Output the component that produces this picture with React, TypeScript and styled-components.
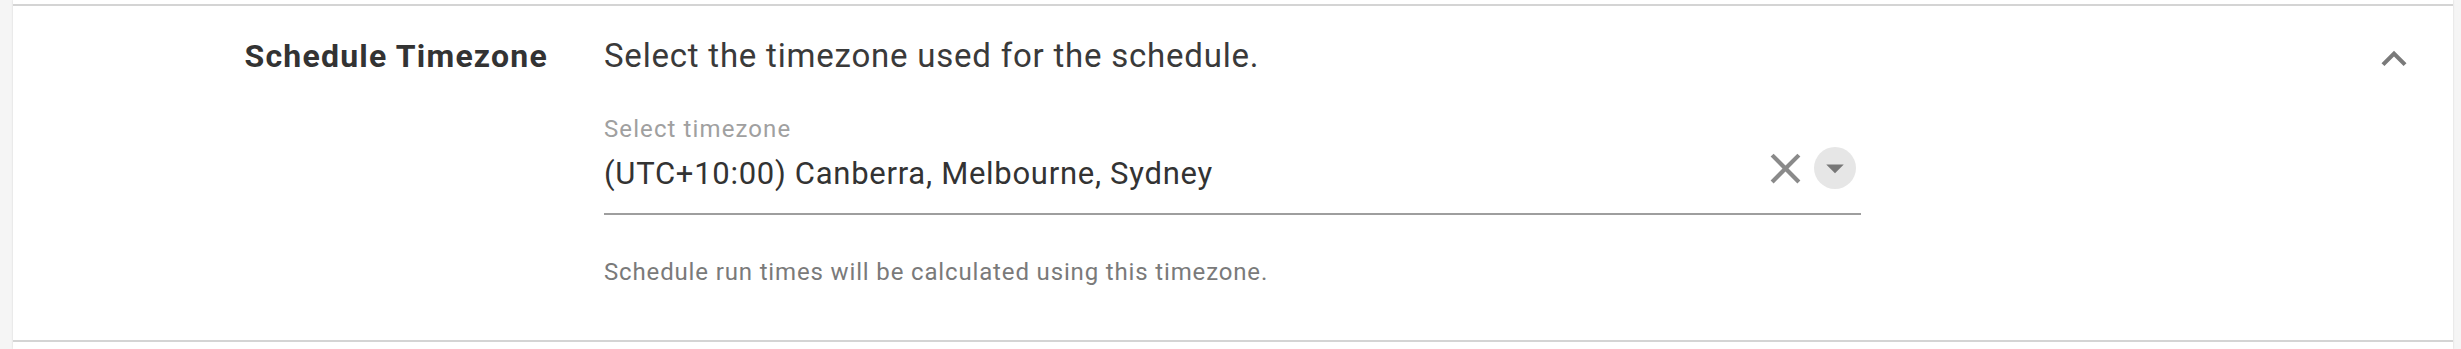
import styled, { createGlobalStyle } from "styled-components";

const GlobalStyle = createGlobalStyle`
  html, body {
    margin: 0;
    padding: 0;
    background: #f5f5f5;
    font-family: Roboto, "Liberation Sans", Arial, sans-serif;
  }
`;

const Panel = styled.div`
  margin: 0 8px 0 13px;
  min-height: 349px;
  padding-top: 4px;
  box-sizing: border-box;
  background: #ffffff;
  box-shadow: 0 0 2px rgba(0, 0, 0, 0.14);
`;

const Section = styled.section`
  display: flex;
  align-items: flex-start;
  padding: 30px 0 54px;
  border-top: 2px solid #d4d4d4;
  border-bottom: 2px solid #d4d4d4;
`;

const Heading = styled.h3`
  flex: 0 0 535px;
  margin: 0;
  text-align: right;
  font-size: 32px;
  line-height: 40px;
  font-weight: 700;
  letter-spacing: 1.2px;
  color: #333333;
`;

const Body = styled.div`
  flex: 0 0 1257px;
  margin-left: 56px;
  display: flex;
  flex-direction: column;
`;

const Description = styled.p`
  margin: 0 0 39px;
  font-size: 33px;
  line-height: 40px;
  letter-spacing: 0.78px;
  color: #3a3a3a;
`;

const FieldLabel = styled.label`
  display: block;
  font-size: 24px;
  line-height: 28px;
  letter-spacing: 1.1px;
  color: #a0a0a0;
`;

const InputRow = styled.div`
  display: flex;
  align-items: flex-start;
  height: 70px;
  padding-right: 5px;
  border-bottom: 2px solid #9e9e9e;
`;

const Value = styled.span`
  flex: 1;
  margin-top: 11px;
  font-size: 31px;
  line-height: 40px;
  letter-spacing: 0.72px;
  color: #333333;
  white-space: nowrap;
`;

const Adornments = styled.div`
  display: flex;
  align-items: center;
  height: 42px;
  margin-top: 4px;
  column-gap: 3px;
`;

const IconButton = styled.button<{ $size: number; $filled?: boolean }>`
  display: flex;
  align-items: center;
  justify-content: center;
  width: ${(p) => p.$size}px;
  height: ${(p) => p.$size}px;
  padding: 0;
  border: none;
  border-radius: 50%;
  background: ${(p) => (p.$filled ? "#e6e6e6" : "transparent")};
  cursor: pointer;

  svg {
    flex-shrink: 0;
    display: block;
  }
`;

const HelperText = styled.p`
  margin: 43px 0 0;
  font-size: 24px;
  line-height: 28px;
  letter-spacing: 0.85px;
  color: #7a7a7a;
`;

const Toggle = styled(IconButton)`
  margin: -2px 34px 0 auto;
`;

function CloseIcon() {
  return (
    <svg width="51" height="51" viewBox="0 0 24 24" fill="#8a8a8a">
      <path d="M19 6.41 17.59 5 12 10.59 6.41 5 5 6.41 10.59 12 5 17.59 6.41 19 12 13.41 17.59 19 19 17.59 13.41 12z" />
    </svg>
  );
}

function ArrowDropDownIcon() {
  return (
    <svg width="42" height="42" viewBox="0 0 24 24" fill="#777777">
      <path d="M7 10l5 5 5-5z" />
    </svg>
  );
}

function ExpandLessIcon() {
  return (
    <svg width="50" height="50" viewBox="0 0 24 24" fill="#7a7a7a">
      <path d="M12 8l-6 6 1.41 1.41L12 10.83l4.59 4.58L18 14z" />
    </svg>
  );
}

export default function App() {
  return (
    <>
      <GlobalStyle />
      <Panel>
        <Section>
          <Heading>Schedule Timezone</Heading>
          <Body>
            <Description>Select the timezone used for the schedule.</Description>
            <FieldLabel>Select timezone</FieldLabel>
            <InputRow>
              <Value>(UTC+10:00) Canberra, Melbourne, Sydney</Value>
              <Adornments>
                <IconButton $size={51} aria-label="Clear">
                  <CloseIcon />
                </IconButton>
                <IconButton $size={42} $filled aria-label="Open">
                  <ArrowDropDownIcon />
                </IconButton>
              </Adornments>
            </InputRow>
            <HelperText>
              Schedule run times will be calculated using this timezone.
            </HelperText>
          </Body>
          <Toggle $size={50} aria-label="Collapse">
            <ExpandLessIcon />
          </Toggle>
        </Section>
      </Panel>
    </>
  );
}
